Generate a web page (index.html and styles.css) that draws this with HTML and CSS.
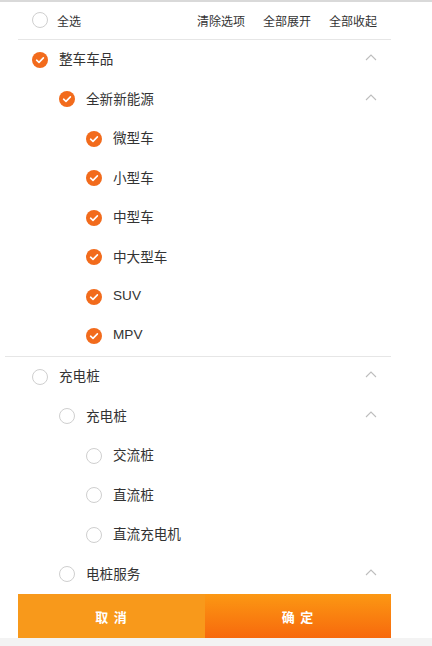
FILE: index.html
```html
<!DOCTYPE html>
<html lang="zh-CN">
<head>
<meta charset="utf-8">
<title>筛选</title>
<link rel="stylesheet" href="styles.css">
</head>
<body>
<div class="topline"></div>
<div class="header">
  <span class="box"></span>
  <span class="all">全选</span>
  <div class="links">
    <span>清除选项</span>
    <span>全部展开</span>
    <span>全部收起</span>
  </div>
</div>

<div class="group">
  <div class="row l1"><span class="box on"><svg viewBox="0 0 16 16"><path d="M4.6 8.2 L7 10.4 L11.4 5.9"/></svg></span><span class="label">整车车品</span><svg class="chev" viewBox="0 0 12 7"><polyline points="1,6 6,1 11,6"/></svg></div>
  <div class="row l2"><span class="box on"><svg viewBox="0 0 16 16"><path d="M4.6 8.2 L7 10.4 L11.4 5.9"/></svg></span><span class="label">全新新能源</span><svg class="chev" viewBox="0 0 12 7"><polyline points="1,6 6,1 11,6"/></svg></div>
  <div class="row l3"><span class="box on"><svg viewBox="0 0 16 16"><path d="M4.6 8.2 L7 10.4 L11.4 5.9"/></svg></span><span class="label">微型车</span></div>
  <div class="row l3"><span class="box on"><svg viewBox="0 0 16 16"><path d="M4.6 8.2 L7 10.4 L11.4 5.9"/></svg></span><span class="label">小型车</span></div>
  <div class="row l3"><span class="box on"><svg viewBox="0 0 16 16"><path d="M4.6 8.2 L7 10.4 L11.4 5.9"/></svg></span><span class="label">中型车</span></div>
  <div class="row l3"><span class="box on"><svg viewBox="0 0 16 16"><path d="M4.6 8.2 L7 10.4 L11.4 5.9"/></svg></span><span class="label">中大型车</span></div>
  <div class="row l3"><span class="box on"><svg viewBox="0 0 16 16"><path d="M4.6 8.2 L7 10.4 L11.4 5.9"/></svg></span><span class="label">SUV</span></div>
  <div class="row l3"><span class="box on"><svg viewBox="0 0 16 16"><path d="M4.6 8.2 L7 10.4 L11.4 5.9"/></svg></span><span class="label">MPV</span></div>
</div>

<div class="group last">
  <div class="row l1"><span class="box"></span><span class="label">充电桩</span><svg class="chev" viewBox="0 0 12 7"><polyline points="1,6 6,1 11,6"/></svg></div>
  <div class="row l2"><span class="box"></span><span class="label">充电桩</span><svg class="chev" viewBox="0 0 12 7"><polyline points="1,6 6,1 11,6"/></svg></div>
  <div class="row l3"><span class="box"></span><span class="label">交流桩</span></div>
  <div class="row l3"><span class="box"></span><span class="label">直流桩</span></div>
  <div class="row l3"><span class="box"></span><span class="label">直流充电机</span></div>
  <div class="row l2"><span class="box"></span><span class="label">电桩服务</span><svg class="chev" viewBox="0 0 12 7"><polyline points="1,6 6,1 11,6"/></svg></div>
</div>

<div class="footer">
  <div class="btns">
    <button class="btn cancel">取 消</button>
    <button class="btn ok">确 定</button>
  </div>
  <div class="strip"></div>
</div>
</body>
</html>
```

FILE: styles.css
```css
html, body {
  margin: 0;
  padding: 0;
  background: #fff;
  font-family: "Liberation Sans", "Noto Sans CJK SC", sans-serif;
  color: #333;
  overflow: hidden;
}

.topline {
  height: 2px;
  background: #d9d9d9;
}

.header {
  margin-left: 18px;
  width: 373px;
  box-sizing: border-box;
  padding: 0 14px;
  display: flex;
  align-items: center;
  border-bottom: 1px solid #e6e6e6;
  font-size: 12px;
  height: 39px;
  margin-top: -1px;
}

.header .all {
  margin-left: 9px;
}

.links {
  margin-left: auto;
  display: flex;
  gap: 18px;
}

.box {
  width: 16px;
  height: 16px;
  box-sizing: border-box;
  border: 1px solid #cfcfcf;
  border-radius: 50%;
  background: #fff;
  flex: none;
  display: flex;
  align-items: center;
  justify-content: center;
}

.box.on {
  border: none;
  background: #f26b1c;
}

.box svg {
  width: 16px;
  height: 16px;
}

.box svg path {
  fill: none;
  stroke: #fff;
  stroke-width: 1.6;
  stroke-linecap: round;
  stroke-linejoin: round;
}

.group {
  margin-left: 5px;
  width: 386px;
  border-bottom: 1px solid #e6e6e6;
}

.group.last {
  border-bottom: none;
}

.row {
  height: 39.5px;
  display: flex;
  align-items: center;
  padding-right: 14px;
  box-sizing: border-box;
  font-size: 13.6px;
}

.row.l1 { padding-left: 27px; }
.row.l2 { padding-left: 54px; }
.row.l3 { padding-left: 81px; }

.label {
  margin-left: 11px;
  margin-top: -3px;
}

.chev {
  margin-left: auto;
  width: 12px;
  height: 7px;
  margin-top: -4px;
}

.chev polyline {
  fill: none;
  stroke: #bdbdbd;
  stroke-width: 1.1;
}

.footer {
  position: fixed;
  left: 0;
  right: 0;
  bottom: 0;
}

.btns {
  margin-left: 18px;
  width: 373px;
  height: 44px;
  display: flex;
}

.btn {
  border: none;
  margin: 0;
  padding: 0;
  color: #fff;
  font-family: "Liberation Sans", "Noto Sans CJK SC", sans-serif;
  font-weight: bold;
  font-size: 13px;
  letter-spacing: 1px;
}

.cancel {
  width: 187px;
  background: #f8991b;
}

.ok {
  flex: 1;
  background: linear-gradient(#fc9813, #f7690d);
}

.strip {
  height: 8px;
  background: #f3f3f3;
}
```
